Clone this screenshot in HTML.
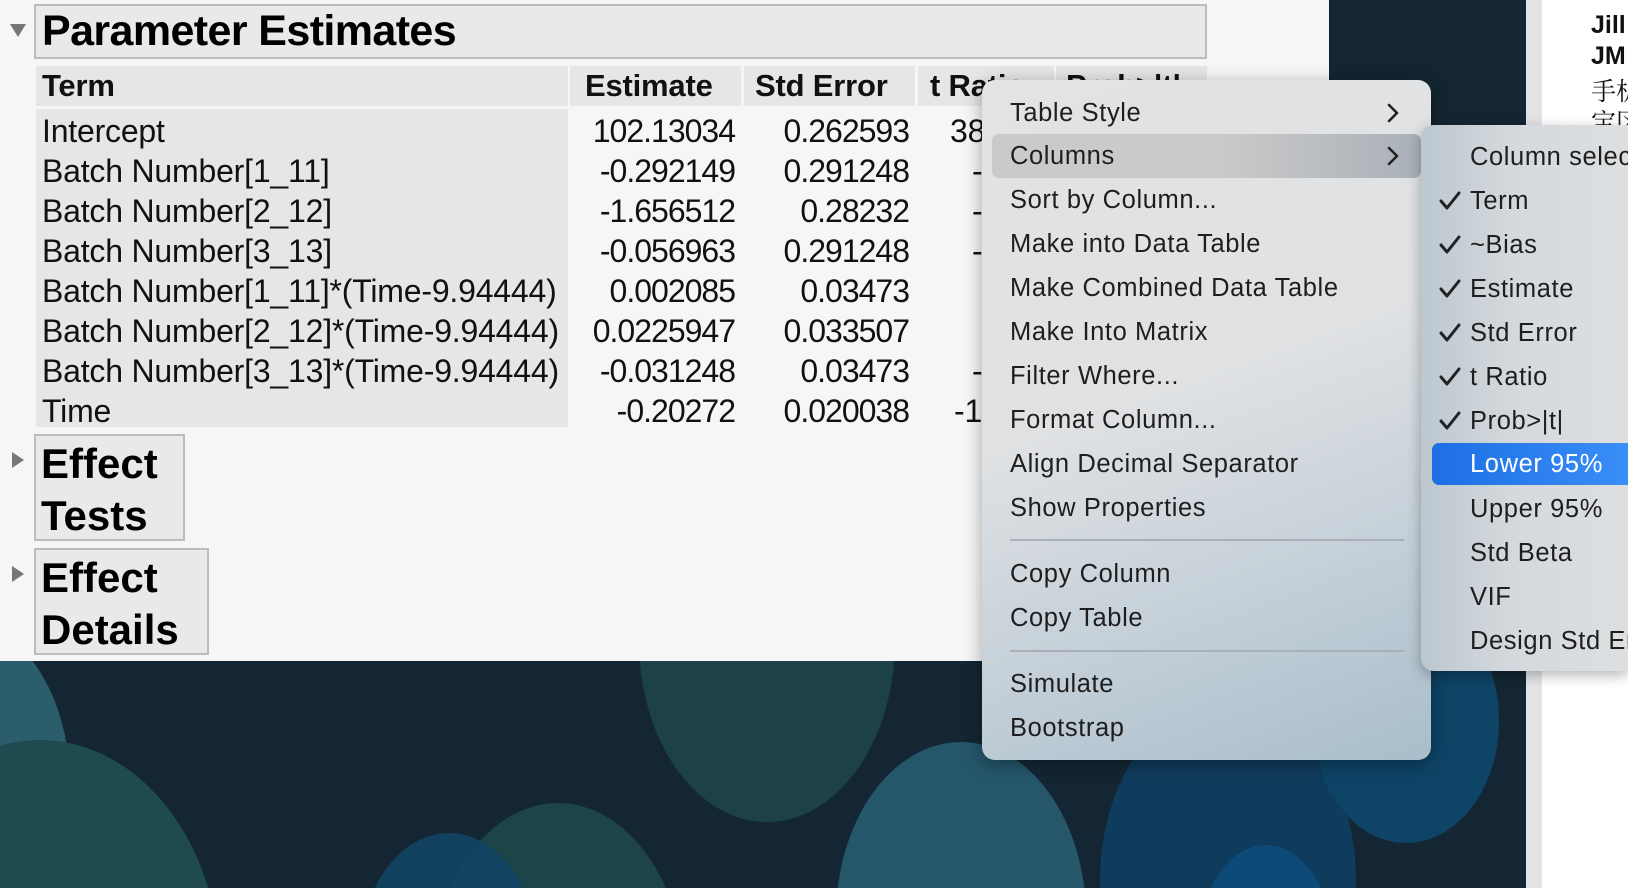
<!DOCTYPE html>
<html><head><meta charset="utf-8"><style>
*{margin:0;padding:0;box-sizing:border-box}
html,body{width:1628px;height:888px;overflow:hidden}
body{background:#142633;font-family:"Liberation Sans",sans-serif}
#wrap{position:relative;width:1628px;height:888px;overflow:hidden;background:#142633}
.abs{position:absolute}
#panel{left:0;top:0;width:1329px;height:661px;background:#f6f6f6}
.hbox{background:#e9e9e9;border:2px solid #bdbdb8}
.bt{font-weight:bold;color:#000;letter-spacing:-0.6px}
.row{position:absolute;height:40px;line-height:40px;font-size:32px;letter-spacing:-0.2px;color:#111;white-space:nowrap}
.num{text-align:right;letter-spacing:-1px}
.tri{width:0;height:0;position:absolute}
#menu{left:982px;top:80px;width:449px;height:680px;border-radius:13px;background:linear-gradient(160deg,#e2e3e4 0%,#dfe1e3 45%,#c2ced7 75%,#a9bdcb 100%);box-shadow:0 4px 18px rgba(0,0,0,.35)}
.mi{position:absolute;left:28px;font-size:25.5px;color:#1e1e1e;letter-spacing:.6px;white-space:nowrap;line-height:44px;height:44px}
.sep{position:absolute;left:28px;width:394px;height:2px;background:#a9b0b7}
#sub{left:1421px;top:125px;width:207px;height:546px;border-radius:13px 0 0 13px;background:linear-gradient(90deg,#bcc7d0 0%,#d5d9dd 45%,#dddfe1 100%);box-shadow:0 4px 14px rgba(0,0,0,.3);overflow:hidden}
.si{position:absolute;left:49px;font-size:25.5px;color:#1e1e1e;letter-spacing:.6px;white-space:nowrap;line-height:44px;height:44px}
.ck{position:absolute;left:18px;width:22px;height:44px}
.chev{position:absolute;left:404px;width:14px;height:44px}
</style></head><body><div id="wrap">
<svg class="abs" style="left:0;top:0" width="1628" height="888">
<ellipse cx="-40" cy="785" rx="110" ry="165" fill="#2b5e6a"/>
<ellipse cx="40" cy="970" rx="180" ry="230" fill="#1e4a50"/>
<ellipse cx="767" cy="641" rx="128" ry="181" fill="#1c4248"/>
<ellipse cx="558" cy="983" rx="127" ry="180" fill="#1d4448"/>
<ellipse cx="449" cy="963" rx="91" ry="130" fill="#114563" opacity=".9"/>
<ellipse cx="961" cy="917" rx="125" ry="175" fill="#25566a"/>
<ellipse cx="1228" cy="880" rx="128" ry="180" fill="#0f3c5c"/>
<ellipse cx="1406" cy="721" rx="93" ry="122" fill="#0e4466"/>
<ellipse cx="1266" cy="945" rx="67" ry="100" fill="#0d4a78"/>
</svg>
<div class="abs" style="left:1526px;top:0;width:16px;height:888px;background:#e3e4e6"></div>
<div class="abs" style="left:1542px;top:0;width:86px;height:888px;background:#fff"></div>
<div class="abs" style="left:1591px;top:10px;font-size:25px;font-weight:bold;line-height:31px;color:#111;white-space:nowrap">Jill<br>JM</div>
<div class="abs" style="left:1591px;top:75px;font-size:25px;line-height:31px;color:#111;white-space:nowrap;font-family:'Noto Serif CJK SC',serif">手机<br>宝区</div>

<div id="panel" class="abs">
 <div class="tri" style="left:10px;top:24px;border-left:8px solid transparent;border-right:8px solid transparent;border-top:13px solid #777"></div>
 <div class="abs hbox" style="left:34px;top:4px;width:1173px;height:55px"></div>
 <div class="abs bt" style="left:42px;top:6px;font-size:43px;line-height:50px;letter-spacing:-0.6px">Parameter Estimates</div>
 <div class="abs" style="left:36px;top:66px;width:532px;height:40px;background:#e6e6e4"></div>
 <div class="abs" style="left:570px;top:66px;width:171px;height:40px;background:#e6e6e4"></div>
 <div class="abs" style="left:744px;top:66px;width:171px;height:40px;background:#e6e6e4"></div>
 <div class="abs" style="left:918px;top:66px;width:136px;height:40px;background:#e6e6e4"></div>
 <div class="abs" style="left:1056px;top:66px;width:151px;height:40px;background:#e6e6e4"></div>
 <div class="abs" style="left:36px;top:109px;width:532px;height:318px;background:#e6e6e4"></div>
 <div class="row bt" style="left:42px;top:66px;font-size:31px">Term</div>
 <div class="row bt" style="left:585px;top:66px;font-size:31px">Estimate</div>
 <div class="row bt" style="left:755px;top:66px;font-size:31px">Std Error</div>
 <div class="row bt" style="left:930px;top:66px;font-size:31px">t Ratio</div>
 <div class="row bt" style="left:1066px;top:66px;font-size:31px">Prob&gt;|t|</div>
 <div class="row" style="left:42px;top:111px">Intercept</div>
 <div class="row" style="left:42px;top:151px">Batch Number[1_11]</div>
 <div class="row" style="left:42px;top:191px">Batch Number[2_12]</div>
 <div class="row" style="left:42px;top:231px">Batch Number[3_13]</div>
 <div class="row" style="left:42px;top:271px">Batch Number[1_11]*(Time-9.94444)</div>
 <div class="row" style="left:42px;top:311px">Batch Number[2_12]*(Time-9.94444)</div>
 <div class="row" style="left:42px;top:351px">Batch Number[3_13]*(Time-9.94444)</div>
 <div class="row" style="left:42px;top:391px">Time</div>
 <div class="row num" style="left:570px;width:165px;top:111px">102.13034</div>
 <div class="row num" style="left:570px;width:165px;top:151px">-0.292149</div>
 <div class="row num" style="left:570px;width:165px;top:191px">-1.656512</div>
 <div class="row num" style="left:570px;width:165px;top:231px">-0.056963</div>
 <div class="row num" style="left:570px;width:165px;top:271px">0.002085</div>
 <div class="row num" style="left:570px;width:165px;top:311px">0.0225947</div>
 <div class="row num" style="left:570px;width:165px;top:351px">-0.031248</div>
 <div class="row num" style="left:570px;width:165px;top:391px">-0.20272</div>
 <div class="row num" style="left:744px;width:165px;top:111px">0.262593</div>
 <div class="row num" style="left:744px;width:165px;top:151px">0.291248</div>
 <div class="row num" style="left:744px;width:165px;top:191px">0.28232</div>
 <div class="row num" style="left:744px;width:165px;top:231px">0.291248</div>
 <div class="row num" style="left:744px;width:165px;top:271px">0.03473</div>
 <div class="row num" style="left:744px;width:165px;top:311px">0.033507</div>
 <div class="row num" style="left:744px;width:165px;top:351px">0.03473</div>
 <div class="row num" style="left:744px;width:165px;top:391px">0.020038</div>
 <div class="row" style="left:950px;top:111px">38</div>
 <div class="row" style="left:972px;top:151px">-</div>
 <div class="row" style="left:972px;top:191px">-</div>
 <div class="row" style="left:972px;top:231px">-</div>
 <div class="row" style="left:972px;top:351px">-</div>
 <div class="row" style="left:954px;top:391px">-1</div>
 <div class="tri" style="left:12px;top:452px;border-top:8px solid transparent;border-bottom:8px solid transparent;border-left:12px solid #777"></div>
 <div class="abs hbox" style="left:34px;top:434px;width:151px;height:107px"></div>
 <div class="abs bt" style="left:41px;top:438px;font-size:42px;line-height:52px;letter-spacing:0">Effect<br>Tests</div>
 <div class="tri" style="left:12px;top:566px;border-top:8px solid transparent;border-bottom:8px solid transparent;border-left:12px solid #777"></div>
 <div class="abs hbox" style="left:34px;top:548px;width:175px;height:107px"></div>
 <div class="abs bt" style="left:41px;top:552px;font-size:42px;line-height:52px;letter-spacing:0">Effect<br>Details</div>
</div>

<div id="menu" class="abs">
 <div class="mi" style="top:11px">Table Style</div>
 <div class="abs" style="left:10px;top:54px;width:429px;height:44px;border-radius:7px;background:linear-gradient(90deg,#c9cacb,#cdcbca 50%,#a9b1b8)"></div>
 <div class="mi" style="top:54px">Columns</div>
 <svg class="chev" style="top:11px" viewBox="0 0 14 44"><path d="M3 14 L11 22 L3 30" fill="none" stroke="#222" stroke-width="2.6" stroke-linecap="round" stroke-linejoin="round"/></svg>
 <svg class="chev" style="top:54px" viewBox="0 0 14 44"><path d="M3 14 L11 22 L3 30" fill="none" stroke="#222" stroke-width="2.6" stroke-linecap="round" stroke-linejoin="round"/></svg>
 <div class="mi" style="top:98px">Sort by Column...</div>
 <div class="mi" style="top:142px">Make into Data Table</div>
 <div class="mi" style="top:186px">Make Combined Data Table</div>
 <div class="mi" style="top:230px">Make Into Matrix</div>
 <div class="mi" style="top:274px">Filter Where...</div>
 <div class="mi" style="top:318px">Format Column...</div>
 <div class="mi" style="top:362px">Align Decimal Separator</div>
 <div class="mi" style="top:406px">Show Properties</div>
 <div class="sep" style="top:459px"></div>
 <div class="mi" style="top:472px">Copy Column</div>
 <div class="mi" style="top:516px">Copy Table</div>
 <div class="sep" style="top:570px"></div>
 <div class="mi" style="top:582px">Simulate</div>
 <div class="mi" style="top:626px">Bootstrap</div>
</div>

<div id="sub" class="abs">
 <div class="si" style="top:10px">Column selection</div>
 <svg class="ck" style="top:54px" viewBox="0 0 22 44"><path d="M2 22 L8 29 L20 14" fill="none" stroke="#222" stroke-width="3" stroke-linecap="round" stroke-linejoin="round"/></svg><div class="si" style="top:54px">Term</div>
 <svg class="ck" style="top:98px" viewBox="0 0 22 44"><path d="M2 22 L8 29 L20 14" fill="none" stroke="#222" stroke-width="3" stroke-linecap="round" stroke-linejoin="round"/></svg><div class="si" style="top:98px">~Bias</div>
 <svg class="ck" style="top:142px" viewBox="0 0 22 44"><path d="M2 22 L8 29 L20 14" fill="none" stroke="#222" stroke-width="3" stroke-linecap="round" stroke-linejoin="round"/></svg><div class="si" style="top:142px">Estimate</div>
 <svg class="ck" style="top:186px" viewBox="0 0 22 44"><path d="M2 22 L8 29 L20 14" fill="none" stroke="#222" stroke-width="3" stroke-linecap="round" stroke-linejoin="round"/></svg><div class="si" style="top:186px">Std Error</div>
 <svg class="ck" style="top:230px" viewBox="0 0 22 44"><path d="M2 22 L8 29 L20 14" fill="none" stroke="#222" stroke-width="3" stroke-linecap="round" stroke-linejoin="round"/></svg><div class="si" style="top:230px">t Ratio</div>
 <svg class="ck" style="top:274px" viewBox="0 0 22 44"><path d="M2 22 L8 29 L20 14" fill="none" stroke="#222" stroke-width="3" stroke-linecap="round" stroke-linejoin="round"/></svg><div class="si" style="top:274px">Prob&gt;|t|</div>
 <div class="abs" style="left:11px;top:318px;width:196px;height:42px;border-radius:7px 0 0 7px;background:linear-gradient(90deg,#1d6fe3,#3a8ef7)"></div>
 <div class="si" style="top:317px;color:#fff">Lower 95%</div>
 <div class="si" style="top:362px">Upper 95%</div>
 <div class="si" style="top:406px">Std Beta</div>
 <div class="si" style="top:450px">VIF</div>
 <div class="si" style="top:494px">Design Std Error</div>
</div>
</div></body></html>
